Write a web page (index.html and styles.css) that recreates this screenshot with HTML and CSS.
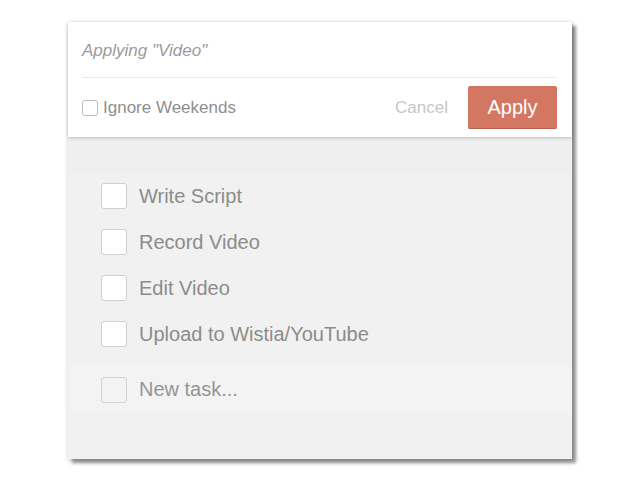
FILE: index.html
```html
<!DOCTYPE html>
<html>
<head>
<meta charset="utf-8">
<link rel="stylesheet" href="styles.css">
</head>
<body>
<div class="panel">
  <div class="header">
    <div class="title">Applying "Video"</div>
    <div class="controls">
      <label class="ignore"><span class="small-box"></span>Ignore Weekends</label>
      <div class="actions">
        <span class="cancel">Cancel</span>
        <button class="apply">Apply</button>
      </div>
    </div>
  </div>
  <div class="body">
    <div class="top-band"></div>
    <ul class="tasks">
      <li class="task"><span class="box"></span>Write Script</li>
      <li class="task"><span class="box"></span>Record Video</li>
      <li class="task"><span class="box"></span>Edit Video</li>
      <li class="task"><span class="box"></span>Upload to Wistia/YouTube</li>
    </ul>
    <div class="task new-task"><span class="box empty"></span>New task...</div>
  </div>
</div>
</body>
</html>
```
FILE: styles.css
```css
html, body {
  margin: 0;
  padding: 0;
  background: #ffffff;
}
body {
  font-family: "Liberation Sans", Arial, Helvetica, sans-serif;
  padding: 22px 0 0 68px;
  height: 488px;
  box-sizing: border-box;
  overflow: hidden;
}
.panel {
  width: 504px;
  height: 437px;
  background: #f1f1f1;
  box-shadow: 4px 4px 3px rgba(0,0,0,0.38), 1px 2px 6px rgba(0,0,0,0.18), 0 0 1px rgba(0,0,0,0.15);
  display: flex;
  flex-direction: column;
  position: relative;
}
.header {
  background: #ffffff;
  padding: 0 15px 0 14px;
  height: 115px;
  box-sizing: border-box;
  box-shadow: 0 1px 3px rgba(0,0,0,0.22);
  position: relative;
  z-index: 1;
}
.title {
  height: 56px;
  display: flex;
  align-items: center;
  font-size: 17px;
  font-style: italic;
  color: #9b9b9b;
  border-bottom: 1px solid #ececec;
  padding-top: 3px;
  box-sizing: border-box;
}
.controls {
  display: flex;
  align-items: center;
  justify-content: space-between;
  padding-top: 8px;
}
.ignore {
  display: flex;
  align-items: center;
  font-size: 17px;
  color: #8f8f8f;
}
.small-box {
  width: 14px;
  height: 14px;
  border: 1px solid #bdbdbd;
  border-radius: 3px;
  margin-right: 5px;
  background: #fff;
}
.actions {
  display: flex;
  align-items: center;
  gap: 20px;
}
.cancel {
  font-size: 17px;
  color: #c6c6c6;
}
.apply {
  width: 89px;
  height: 43px;
  background: #d47762;
  border: none;
  border-bottom: 1px solid #b9604e;
  border-radius: 2px;
  color: #ffffff;
  font-family: "Liberation Sans", Arial, sans-serif;
  font-size: 20px;
  padding: 0;
}
.body {
  flex: 1;
  display: flex;
  flex-direction: column;
  background: #f1f1f1;
}
.top-band {
  height: 36px;
  background: #efefef;
}
.tasks {
  list-style: none;
  margin: 0;
  padding: 0 0 9px 0;
}
.task {
  height: 46px;
  display: flex;
  align-items: center;
  padding-left: 33px;
  font-size: 20px;
  color: #8c8c8c;
}
.box {
  width: 24px;
  height: 24px;
  border: 1px solid #cfcfcf;
  border-radius: 3px;
  background: #ffffff;
  margin-right: 12px;
  flex: none;
}
.box.empty {
  background: transparent;
  border-color: #d2d2d2;
}
.new-task {
  background: #f3f3f3;
  color: #959595;
  height: 47px;
}
```
